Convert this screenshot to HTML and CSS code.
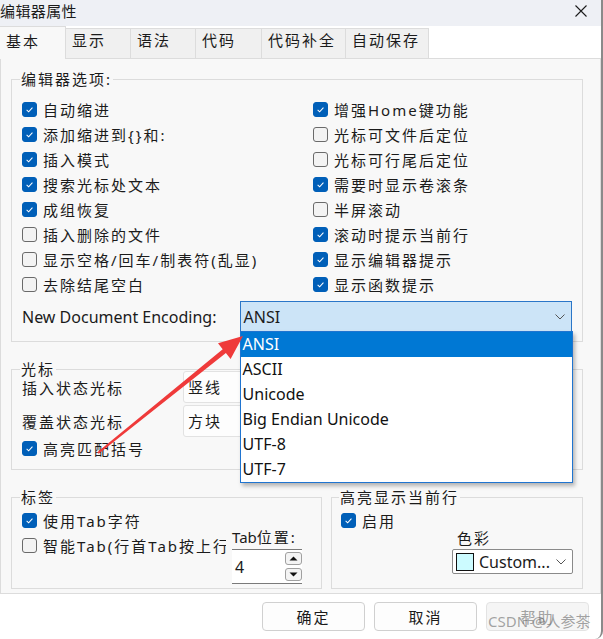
FILE: index.html
```html
<!DOCTYPE html>
<html lang="zh-CN">
<head>
<meta charset="utf-8">
<title>编辑器属性</title>
<link rel="stylesheet" href="styles.css">
</head>
<body>
<div class="window">
  <div class="titlebar">
    <span class="title">编辑器属性</span>
    <svg class="close" width="12" height="12" viewBox="0 0 12 12"><path d="M0.5 0.5 L11.5 11.5 M11.5 0.5 L0.5 11.5" stroke="#1b1b1b" stroke-width="1.1" fill="none"/></svg>
  </div>
  <div class="tabs">
    <div class="tab active w66">基本</div>
    <div class="tab w65">显示</div>
    <div class="tab w65">语法</div>
    <div class="tab w66">代码</div>
    <div class="tab w84">代码补全</div>
    <div class="tab w83">自动保存</div>
  </div>
  <div class="page">
    <div class="group g-editor">
      <span class="group-title t8">编辑器选项:</span>
      <div class="cb-grid">
        <div class="cb-row"><span class="cb on"><svg viewBox="0 0 15 15"><path d="M4.2 7.9 L6.5 10.1 L10.9 5.4"/></svg></span><span class="lbl">自动缩进</span></div>
        <div class="cb-row"><span class="cb on"><svg viewBox="0 0 15 15"><path d="M4.2 7.9 L6.5 10.1 L10.9 5.4"/></svg></span><span class="lbl">增强Home键功能</span></div>
        <div class="cb-row"><span class="cb on"><svg viewBox="0 0 15 15"><path d="M4.2 7.9 L6.5 10.1 L10.9 5.4"/></svg></span><span class="lbl">添加缩进到{}和:</span></div>
        <div class="cb-row"><span class="cb"></span><span class="lbl">光标可文件后定位</span></div>
        <div class="cb-row"><span class="cb on"><svg viewBox="0 0 15 15"><path d="M4.2 7.9 L6.5 10.1 L10.9 5.4"/></svg></span><span class="lbl">插入模式</span></div>
        <div class="cb-row"><span class="cb"></span><span class="lbl">光标可行尾后定位</span></div>
        <div class="cb-row"><span class="cb on"><svg viewBox="0 0 15 15"><path d="M4.2 7.9 L6.5 10.1 L10.9 5.4"/></svg></span><span class="lbl">搜索光标处文本</span></div>
        <div class="cb-row"><span class="cb on"><svg viewBox="0 0 15 15"><path d="M4.2 7.9 L6.5 10.1 L10.9 5.4"/></svg></span><span class="lbl">需要时显示卷滚条</span></div>
        <div class="cb-row"><span class="cb on"><svg viewBox="0 0 15 15"><path d="M4.2 7.9 L6.5 10.1 L10.9 5.4"/></svg></span><span class="lbl">成组恢复</span></div>
        <div class="cb-row"><span class="cb"></span><span class="lbl">半屏滚动</span></div>
        <div class="cb-row"><span class="cb"></span><span class="lbl">插入删除的文件</span></div>
        <div class="cb-row"><span class="cb on"><svg viewBox="0 0 15 15"><path d="M4.2 7.9 L6.5 10.1 L10.9 5.4"/></svg></span><span class="lbl">滚动时提示当前行</span></div>
        <div class="cb-row"><span class="cb"></span><span class="lbl">显示空格/回车/制表符(乱显)</span></div>
        <div class="cb-row"><span class="cb on"><svg viewBox="0 0 15 15"><path d="M4.2 7.9 L6.5 10.1 L10.9 5.4"/></svg></span><span class="lbl">显示编辑器提示</span></div>
        <div class="cb-row"><span class="cb"></span><span class="lbl">去除结尾空白</span></div>
        <div class="cb-row"><span class="cb on"><svg viewBox="0 0 15 15"><path d="M4.2 7.9 L6.5 10.1 L10.9 5.4"/></svg></span><span class="lbl">显示函数提示</span></div>
      </div>
      <div class="enc-row">
        <span class="enc-label">New Document Encoding:</span>
        <div class="select">
          <span class="select-text">ANSI</span>
          <svg class="chev" width="10" height="6" viewBox="0 0 10 6"><path d="M0.5 0.5 L5 5 L9.5 0.5" stroke="#555" stroke-width="1" fill="none"/></svg>
          <ul class="list">
            <li class="sel">ANSI</li>
            <li>ASCII</li>
            <li>Unicode</li>
            <li>Big Endian Unicode</li>
            <li>UTF-8</li>
            <li>UTF-7</li>
          </ul>
        </div>
      </div>
    </div>

    <div class="group g-cursor">
      <span class="group-title t8">光标</span>
      <div class="combo-row">
        <span class="combo-label">插入状态光标</span>
        <div class="combo">竖线</div>
      </div>
      <div class="combo-row second">
        <span class="combo-label">覆盖状态光标</span>
        <div class="combo">方块</div>
      </div>
      <div class="cb-row short"><span class="cb on"><svg viewBox="0 0 15 15"><path d="M4.2 7.9 L6.5 10.1 L10.9 5.4"/></svg></span><span class="lbl">高亮匹配括号</span></div>
    </div>

    <div class="group-row">
      <div class="group g-tabs">
        <span class="group-title t8">标签</span>
        <div class="tabs-left">
          <div class="cb-row"><span class="cb on"><svg viewBox="0 0 15 15"><path d="M4.2 7.9 L6.5 10.1 L10.9 5.4"/></svg></span><span class="lbl">使用Tab字符</span></div>
          <div class="cb-row"><span class="cb"></span><span class="lbl">智能Tab(行首Tab按上行缩进)</span></div>
        </div>
        <div class="tabs-right">
          <div class="spin-label"><span class="lat">Tab</span>位置:</div>
          <div class="spin">
            <span class="spin-val">4</span>
            <div class="spin-btns">
              <span class="spin-btn"><svg width="9" height="5" viewBox="0 0 9 5"><path d="M0.5 4.5 L4.5 0.5 L8.5 4.5 Z" fill="#111"/></svg></span>
              <span class="spin-btn"><svg width="9" height="5" viewBox="0 0 9 5"><path d="M0.5 0.5 L4.5 4.5 L8.5 0.5 Z" fill="#111"/></svg></span>
            </div>
          </div>
        </div>
      </div>
      <div class="group g-hl">
        <span class="group-title t7">高亮显示当前行</span>
        <div class="cb-row hl-row"><span class="cb on"><svg viewBox="0 0 15 15"><path d="M4.2 7.9 L6.5 10.1 L10.9 5.4"/></svg></span><span class="lbl">启用</span></div>
        <div class="color-block">
          <div class="color-label">色彩</div>
          <div class="color-combo">
            <span class="swatch"></span>
            <span class="color-text">Custom...</span>
            <svg class="chev" width="10" height="6" viewBox="0 0 10 6"><path d="M0.5 0.5 L5 5 L9.5 0.5" stroke="#555" stroke-width="1" fill="none"/></svg>
          </div>
        </div>
      </div>
    </div>
  </div>
  <div class="buttons">
    <button class="btn">确定</button>
    <button class="btn">取消</button>
    <button class="btn disabled">帮助</button>
  </div>
  <div class="watermark">CSDN @人参茶</div>
  <svg class="arrow" width="603" height="639" viewBox="0 0 603 639">
    <polygon points="97.3,452.2 222.7,349.2 218.0,343.3 243,336 230.6,358.9 225.9,353.0 98.7,453.8" fill="#ef3a3a"/>
  </svg>
</div>
</body>
</html>
```

FILE: styles.css
```css
* { box-sizing: border-box; }

body {
  margin: 0;
  font-family: "Noto Sans", "Noto Sans CJK SC", sans-serif;
  color: #1b1b1b;
  background: #ffffff;
}

.window {
  position: relative;
  width: 603px;
  height: 639px;
  background: #ffffff;
  border-right: 2px solid #8a8a8a;
  border-bottom-right-radius: 8px;
  overflow: hidden;
}

/* title bar */
.titlebar {
  height: 26px;
  background: #eef0f5;
  display: flex;
  align-items: flex-start;
}
.title {
  flex: 1;
  font-size: 15px;
  line-height: 22px;
  letter-spacing: 0.4px;
}
.close {
  margin-top: 5px;
  margin-right: 14px;
}

/* tabs */
.tabs {
  height: 32px;
  display: flex;
  align-items: flex-end;
  font-size: 15px;
  letter-spacing: 2px;
}
.tab {
  height: 30px;
  background: #f0f0f0;
  border: 1px solid #dcdcdc;
  border-left: none;
  border-bottom: none;
  padding-left: 6px;
  line-height: 22px;
  white-space: nowrap;
}
.tab.active {
  height: 33px;
  margin-bottom: -1px;
  background: #f8f8f8;
  line-height: 28px;
  position: relative;
  z-index: 1;
}
.w65 { width: 65px; }
.w66 { width: 66px; }
.w83 { width: 83px; }
.w84 { width: 84px; }

/* page */
.page {
  height: 536px;
  background: #f8f8f8;
  border: 1px solid #dcdcdc;
  padding: 0 10px;
}

.group {
  position: relative;
  border: 1px solid #dcdcdc;
}
.group-title {
  position: absolute;
  top: -10px;
  padding: 0 1px;
  background: #f8f8f8;
  font-size: 15px;
  letter-spacing: 2px;
  line-height: 18px;
  white-space: nowrap;
}
.t7 { left: 7px; }
.t8 { left: 8px; }

.lbl {
  font-size: 15px;
  letter-spacing: 2px;
  white-space: nowrap;
}

/* editor options */
.g-editor {
  width: 572px;
  margin-top: 20px;
  padding: 17px 10px 9px 10px;
}
.cb-grid {
  display: grid;
  grid-template-columns: 291px 1fr;
  grid-auto-rows: 25px;
}
.cb-row {
  display: flex;
  align-items: center;
  height: 25px;
  gap: 6px;
}
.cb {
  flex: none;
  width: 15px;
  height: 15px;
  border-radius: 3px;
  border: 1px solid #6a6a6a;
  background: #f3f3f3;
  display: flex;
}
.cb.on {
  border-color: #005fb8;
  background: #005fb8;
}
.cb svg {
  width: 13px;
  height: 13px;
}
.cb svg path {
  stroke: #ffffff;
  stroke-width: 1.2;
  fill: none;
}

.enc-row {
  display: flex;
  align-items: center;
  margin-top: 4px;
  height: 31px;
}
.enc-label {
  width: 218px;
  font-size: 16px;
  white-space: nowrap;
}
.select {
  position: relative;
  z-index: 10;
  width: 333px;
  height: 31px;
  background: #cce4f7;
  border: 1px solid #2a76c8;
  display: flex;
  align-items: center;
  padding: 0 6px 0 3px;
}
.select-text {
  flex: 1;
  font-size: 16px;
}
.list {
  position: absolute;
  top: 100%;
  left: -1px;
  width: 333px;
  margin: 0;
  padding: 0;
  list-style: none;
  background: #ffffff;
  border: 1px solid #1f74d0;
  box-shadow: 2px 3px 4px rgba(0, 0, 0, 0.28);
}
.list li {
  height: 25px;
  line-height: 25px;
  padding-left: 2px;
  font-size: 16px;
  color: #111;
}
.list li.sel {
  background: #0078d4;
  color: #ffffff;
}

/* cursor group */
.g-cursor {
  width: 572px;
  margin-top: 27px;
  padding: 1px 10px 9px 10px;
}
.combo-row {
  display: flex;
  align-items: center;
  height: 32px;
}
.combo-row.second {
  margin-top: 2px;
}
.combo-label {
  width: 161px;
  font-size: 15px;
  letter-spacing: 2px;
  white-space: nowrap;
}
.combo {
  width: 140px;
  height: 32px;
  background: #fdfdfd;
  border: 1px solid #e2e2e2;
  border-radius: 3px;
  padding-left: 4px;
  font-size: 15px;
  letter-spacing: 2px;
  line-height: 30px;
}
.cb-row.short {
  height: 23px;
}

/* bottom groups */
.group-row {
  display: flex;
  gap: 9px;
  margin-top: 27px;
}
.g-tabs {
  width: 311px;
  height: 92px;
  padding: 10px 0 0 10px;
  display: flex;
}
.tabs-left {
  width: 204px;
  overflow: hidden;
}
.tabs-right {
  margin-left: 6px;
  padding-top: 20px;
}
.spin-label {
  font-size: 15px;
  letter-spacing: 2px;
  line-height: 18px;
  white-space: nowrap;
}
.lat {
  letter-spacing: 0;
}
.spin {
  margin-top: 3px;
  width: 70px;
  height: 35px;
  background: #ffffff;
  border-top: 1px solid #7a7a7a;
  border-bottom: 1px solid #7a7a7a;
  display: flex;
  align-items: center;
  padding: 0 0 0 3px;
}
.spin-val {
  flex: 1;
  font-size: 16px;
}
.spin-btns {
  display: flex;
  flex-direction: column;
  gap: 3px;
}
.spin-btn {
  width: 17px;
  height: 13px;
  border: 1px solid #a0a0a0;
  border-radius: 3px;
  background: #f4f4f4;
  display: flex;
  align-items: center;
  justify-content: center;
}

.g-hl {
  width: 252px;
  height: 92px;
  padding: 13px 9px 0 9px;
  display: flex;
  flex-direction: column;
}
.cb-row.hl-row {
  height: 19px;
}
.color-block {
  margin-left: auto;
  width: 121px;
}
.color-label {
  padding-left: 5px;
  font-size: 15px;
  letter-spacing: 2px;
  line-height: 16px;
}
.color-combo {
  margin-top: 3px;
  height: 25px;
  background: #ffffff;
  border: 1px solid #8a8a8a;
  border-radius: 2px;
  display: flex;
  align-items: center;
  padding: 0 6px 0 3px;
  gap: 5px;
}
.swatch {
  flex: none;
  width: 18px;
  height: 18px;
  background: #ccfbff;
  border: 1px solid #111;
}
.color-text {
  flex: 1;
  font-size: 16px;
  white-space: nowrap;
}

/* bottom buttons */
.buttons {
  height: 45px;
  display: flex;
  justify-content: flex-end;
  gap: 9px;
  padding: 8px 12px 0 0;
}
.btn {
  width: 103px;
  height: 29px;
  background: #fdfdfd;
  border: 1px solid #d0d0d0;
  border-radius: 4px;
  font-family: "Noto Sans CJK SC", sans-serif;
  font-size: 15px;
  letter-spacing: 2px;
  color: #1b1b1b;
  padding: 0;
}
.btn.disabled {
  background: #f5f5f5;
  border-color: #e3e3e3;
  color: #a2a2a2;
}

.watermark {
  position: absolute;
  left: 488px;
  top: 610px;
  font-size: 15px;
  color: rgba(105, 105, 105, 0.6);
  white-space: nowrap;
  pointer-events: none;
}

.arrow {
  position: absolute;
  left: 0;
  top: 0;
  z-index: 20;
  pointer-events: none;
}
```
